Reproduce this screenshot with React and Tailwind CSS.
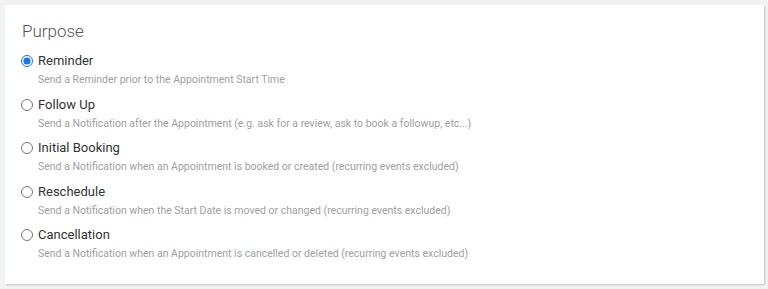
import { useState } from "react";

const purposes = [
    { id: "reminder", label: "Reminder", desc: "Send a Reminder prior to the Appointment Start Time" },
    { id: "followup", label: "Follow Up", desc: "Send a Notification after the Appointment (e.g. ask for a review, ask to book a followup, etc...)" },
    { id: "initial", label: "Initial Booking", desc: "Send a Notification when an Appointment is booked or created (recurring events excluded)" },
    { id: "reschedule", label: "Reschedule", desc: "Send a Notification when the Start Date is moved or changed (recurring events excluded)" },
    { id: "cancellation", label: "Cancellation", desc: "Send a Notification when an Appointment is cancelled or deleted (recurring events excluded)" },
];

export default function App() {
    const [selected, setSelected] = useState("reminder");

    return (
        <div className="h-[289px] bg-[#f1f3f3] pt-[5px] pl-[5px]" style={{ fontFamily: "Roboto, 'Liberation Sans', sans-serif" }}>
            <div className="w-[759px] h-[279px] bg-white shadow-[1px_1px_2px_rgba(0,0,0,0.2)] pt-[14px] pl-[17px]">
                <h2 className="text-[17px] leading-[24px] font-light text-[#555]">Purpose</h2>
                <div className="mt-[9px] flex flex-col gap-[7.5px]">
                    {purposes.map((p) => (
                        <label key={p.id} className="block cursor-pointer">
                            <div className="flex items-center h-[18px]">
                                <input
                                    type="radio"
                                    name="purpose"
                                    checked={selected === p.id}
                                    onChange={() => setSelected(p.id)}
                                    className="m-0 -ml-[1px] w-[12px] h-[12px] accent-[#1a73e8]"
                                />
                                <span className="ml-[5px] text-[13px] text-[#333]">{p.label}</span>
                            </div>
                            <p className="mt-[2px] pl-[16px] text-[10.5px] leading-[16px] text-[#a0a0a0]">{p.desc}</p>
                        </label>
                    ))}
                </div>
            </div>
        </div>
    );
}
